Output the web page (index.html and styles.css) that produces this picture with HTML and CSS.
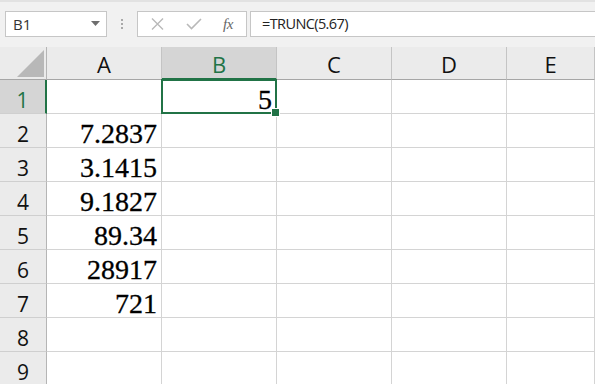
FILE: index.html
```html
<!DOCTYPE html>
<html>
<head>
<meta charset="utf-8">
<link rel="stylesheet" href="styles.css">
</head>
<body>
<div class="toolbar">
  <div class="namebox">
    <span class="nb-text">B1</span>
    <svg class="dd" width="9" height="5" viewBox="0 0 9 5"><polygon points="0,0 9,0 4.5,5" fill="#6e6e6e"/></svg>
  </div>
  <div class="dots"><i></i><i></i><i></i></div>
  <div class="fbuttons">
    <svg class="ico" width="13" height="12" viewBox="0 0 13 12"><path d="M1 0.5 L12 11.5 M12 0.5 L1 11.5" stroke="#b9b9b9" stroke-width="1.4" fill="none"/></svg>
    <svg class="ico" width="16" height="12" viewBox="0 0 16 12"><path d="M1 6 L5.5 10.5 L15 1" stroke="#b9b9b9" stroke-width="1.6" fill="none"/></svg>
    <span class="fx">fx</span>
  </div>
  <div class="formula">=TRUNC(5.67)</div>
</div>
<div class="sheet">
  <div class="corner"><svg width="27" height="27" viewBox="0 0 27 27"><polygon points="27,0 27,27 0,27" fill="#b8b8b8"/></svg></div>
  <div class="ch">A</div>
  <div class="ch sel">B</div>
  <div class="ch">C</div>
  <div class="ch">D</div>
  <div class="ch">E</div>

  <div class="rh sel">1</div><div class="c"></div><div class="c active">5</div><div class="c"></div><div class="c"></div><div class="c"></div>
  <div class="rh">2</div><div class="c">7.2837</div><div class="c"></div><div class="c"></div><div class="c"></div><div class="c"></div>
  <div class="rh">3</div><div class="c">3.1415</div><div class="c"></div><div class="c"></div><div class="c"></div><div class="c"></div>
  <div class="rh">4</div><div class="c">9.1827</div><div class="c"></div><div class="c"></div><div class="c"></div><div class="c"></div>
  <div class="rh">5</div><div class="c">89.34</div><div class="c"></div><div class="c"></div><div class="c"></div><div class="c"></div>
  <div class="rh">6</div><div class="c">28917</div><div class="c"></div><div class="c"></div><div class="c"></div><div class="c"></div>
  <div class="rh">7</div><div class="c">721</div><div class="c"></div><div class="c"></div><div class="c"></div><div class="c"></div>
  <div class="rh">8</div><div class="c"></div><div class="c"></div><div class="c"></div><div class="c"></div><div class="c"></div>
  <div class="rh">9</div><div class="c"></div><div class="c"></div><div class="c"></div><div class="c"></div><div class="c"></div>
</div>
</body>
</html>
```

FILE: styles.css
```css
* { box-sizing: border-box; }
html, body { margin: 0; padding: 0; }
body {
  width: 595px;
  height: 384px;
  overflow: hidden;
  background: #fff;
  font-family: "Open Sans", "Noto Sans", sans-serif;
}
.toolbar {
  height: 47px;
  background: #f1f1f1;
  border-top: 2px solid #e2e2e2;
  padding-top: 9px;
  display: flex;
  align-items: flex-start;
}
.namebox {
  margin-left: 5px;
  width: 102px;
  height: 26px;
  background: #fff;
  border: 1px solid #c6c6c6;
  display: flex;
  align-items: center;
  justify-content: space-between;
  padding: 0 6px 0 7px;
}
.nb-text { font-size: 15px; color: #333; }
.dd { margin-bottom: 2px; }
.dots {
  width: 30px;
  height: 26px;
  display: flex;
  flex-direction: column;
  align-items: center;
  justify-content: center;
  gap: 2px;
}
.dots i { display: block; width: 2px; height: 2px; background: #a9a9a9; }
.fbuttons {
  width: 110px;
  height: 26px;
  background: #fff;
  border: 1px solid #c6c6c6;
  display: flex;
  align-items: center;
  padding-left: 13px;
}
.fbuttons .ico:first-child { margin-right: 22px; }
.fbuttons .ico:nth-child(2) { margin-right: 21px; }
.fx {
  font-family: "Liberation Serif", serif;
  font-style: italic;
  font-size: 15px;
  color: #666;
  letter-spacing: -0.5px;
}
.formula {
  margin-left: 3px;
  flex: 1;
  height: 26px;
  background: #fff;
  border: 1px solid #c6c6c6;
  border-right: none;
  font-size: 14.5px;
  letter-spacing: -0.6px;
  color: #222;
  padding-left: 11px;
  line-height: 24px;
}
.sheet {
  display: grid;
  grid-template-columns: 47px 115px 115px 115px 115px 1fr;
  grid-template-rows: 33px repeat(9, 34px);
}
.corner {
  background: #ebebeb;
  border-right: 1px solid #b5b5b5;
  border-bottom: 1px solid #a6a6a6;
  display: flex;
  align-items: flex-end;
  justify-content: flex-end;
  padding: 0 2px 2px 0;
}
.ch {
  background: #ebebeb;
  border-right: 1px solid #c4c4c4;
  border-bottom: 1px solid #a6a6a6;
  font-size: 22px;
  color: #111;
  text-align: center;
  line-height: 34px;
}
.ch.sel {
  background: #d5d5d5;
  color: #217346;
  border-bottom: 2px solid #217346;
}
.rh {
  background: #ebebeb;
  border-right: 1px solid #b5b5b5;
  border-bottom: 1px solid #cfcfcf;
  font-size: 21px;
  color: #111;
  text-align: center;
  padding-top: 7px;
  line-height: 26px;
}
.rh.sel {
  background: #d5d5d5;
  color: #217346;
  border-right: 2px solid #217346;
}
.c {
  border-right: 1px solid #d4d4d4;
  border-bottom: 1px solid #d4d4d4;
  font-family: "Liberation Serif", serif;
  font-size: 28px;
  -webkit-text-stroke: 0.3px #000;
  color: #000;
  text-align: right;
  padding-right: 4px;
  padding-top: 7px;
  line-height: 26px;
}
.c.active { position: relative; }
.c.active::before {
  content: "";
  position: absolute;
  left: -1px;
  top: -1px;
  right: -1px;
  bottom: -1px;
  border: 2px solid #217346;
}
.c.active::after {
  content: "";
  position: absolute;
  right: -4px;
  bottom: -4px;
  width: 7px;
  height: 7px;
  background: #217346;
  border: 1px solid #fff;
}
```
